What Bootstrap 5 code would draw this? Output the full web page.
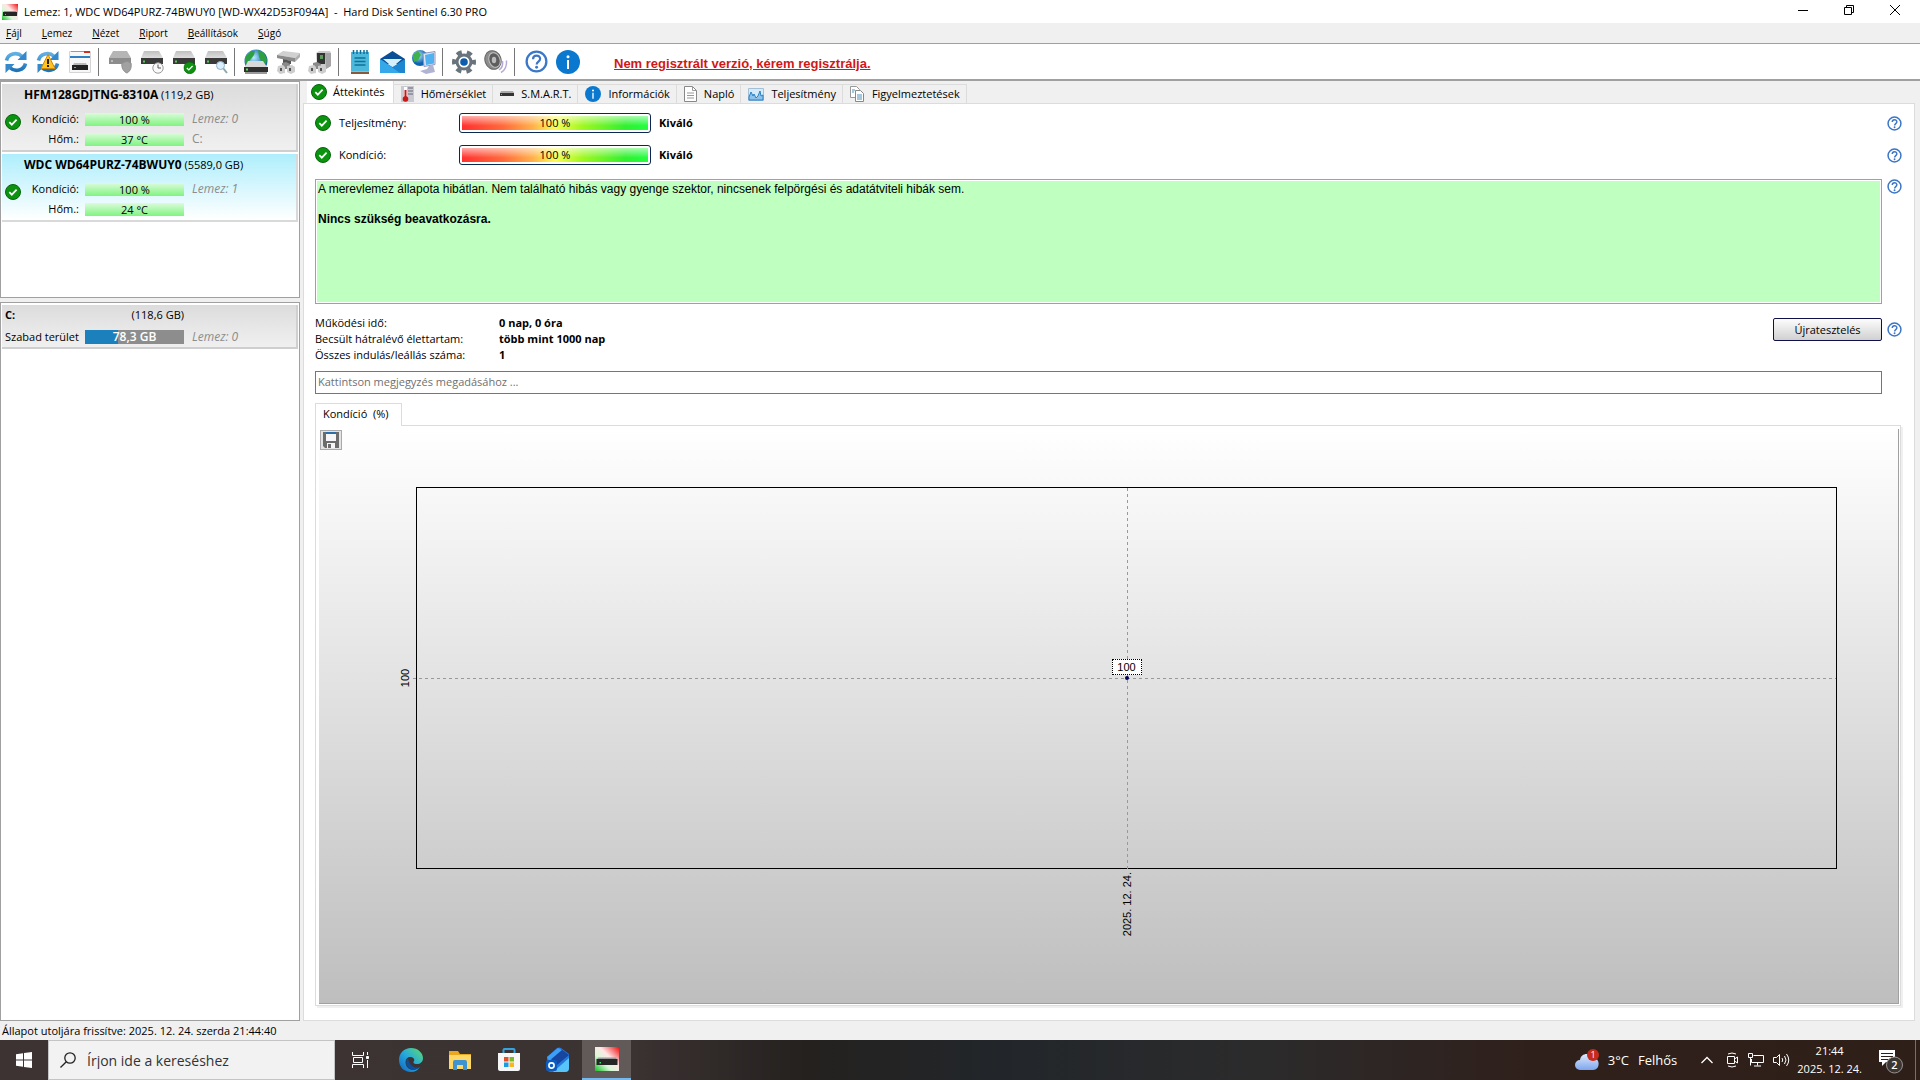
<!DOCTYPE html>
<html lang="hu">
<head>
<meta charset="utf-8">
<meta name="viewport" content="width=device-width, initial-scale=1">
<title>Hard Disk Sentinel 6.30 PRO</title>
<link href="https://cdn.jsdelivr.net/npm/bootstrap@5.3.0/dist/css/bootstrap.min.css" rel="stylesheet">
<style>
:root{--face:#f0f0f0;--edge:#dcdcdc}
body{font-family:"Open Sans","Noto Sans",sans-serif;font-size:11px;line-height:16px;color:#000;background:var(--face);height:100vh;overflow:hidden}
button{font:inherit;color:inherit}
.plain-btn{border:0;background:none;padding:0;display:flex;align-items:center;justify-content:center}
svg{display:block;flex:none}
.title-bar{height:23px;background:#fff;padding:0 2px}
.title-text{padding-left:2px;white-space:pre}
.title-bar .plain-btn{width:46px;height:20px}
.menu-bar{height:21px;padding:0 6px;gap:20px;font-size:10px;border-bottom:1px solid #a0a0a0}
.menu-bar a,.menu-bar u{color:#000}
.menu-bar a{text-decoration:none}
.tool-bar{height:37px;background:#fff;border-bottom:2px solid #a0a0a0}
.tool-bar .plain-btn{width:32px;height:32px}
.tool-sep{width:8px;height:28px;padding-left:2px}
.tool-sep::before{content:"";display:block;width:1px;height:28px;background:#777}
.reg-link{font:bold 13px/16px "Liberation Sans",Arial,sans-serif;color:#d01818;margin-left:30px;padding-top:4px}
.reg-link:hover{color:#a00}
.side-pane{width:300px;gap:4px}
.side-box{background:#fff;border:1px solid #a0a0a0;padding:2px 1px}
.disk-box{height:217px}
.disk-item{border:solid #cfcfcf;border-width:0 2px 2px 0;background:linear-gradient(#dcdcdc,#f0f0f0);height:68px;margin-bottom:2px;padding:3px 0 0 3px}
.disk-item.active{background:linear-gradient(#aeeefc,#fff);border-color:#d9d9d9}
.disk-name{padding-left:19px;height:20px}
.disk-name strong{font-size:12px}
.disk-grid{display:grid;grid-template-columns:20px 54px 105px 1fr;row-gap:4px;grid-auto-rows:16px;align-items:center}
.disk-grid .disk-state{grid-row:1/3;align-self:start;padding-top:3px}
.disk-grid .lab{text-align:right}
.meter-green{margin-left:6px;height:13px;line-height:13px;text-align:center;background:linear-gradient(#dcfbdc,#80f480)}
.side-note{padding-left:8px;color:#8c8c8c;font-style:italic;font-size:12px}
.volume-item{height:44px;border:solid #cfcfcf;border-width:0 2px 2px 0;background:linear-gradient(#dcdcdc,#f0f0f0);padding:2px 0 0 3px}
.volume-grid{display:grid;grid-template-columns:80px 99px 1fr;row-gap:6px;grid-auto-rows:16px;align-items:center}
.vol-label{white-space:nowrap}
.meter-blue{height:14px;line-height:14px;text-align:center;color:#fff;font-size:12px;font-weight:600;background:linear-gradient(90deg,#1c80bd 33%,#8d8d8d 33%)}
.main-pane{margin-left:3px;padding-right:5px}
.tab-strip{height:23px;padding:0 4px;margin-bottom:-1px}
.tab-strip .nav-link{border:1px solid var(--edge);border-left:0;border-radius:0;color:#000;background:var(--face);padding:0 6px 0 7px;height:20px;gap:7px;font-size:11px;display:flex;align-items:center}
.tab-strip .nav-link.active{background:#fff;height:23px;border-bottom:0;border-top:0;padding:0 8px 2px 4px;gap:6px}
.tab-page{background:#fff;border:1px solid var(--edge);padding:9px 12px 14px 11px}
.help-col{width:20px;justify-content:flex-end}
.score-row{height:20px}
.score-list{display:grid;gap:12px;margin-bottom:14px}
.score-label{width:120px;padding-left:8px}
.score-meter{width:192px;height:20px;border:1px solid #0a2850;border-radius:3px;padding:2px}
.score-fill{height:14px;line-height:14px;text-align:center;background:linear-gradient(rgba(255,255,255,.6),rgba(255,255,255,0) 70%),linear-gradient(90deg,#ff3030,#ff6a3a 22%,#ffb04a 38%,#fbfb50 50%,#9df820 65%,#30f030 88%,#20ff40)}
.state-box{height:125px;border:1px solid #a0a0a0;background:#bfffbf;box-shadow:inset 0 0 0 1px #fff;padding:2px;font:12px/15px "Liberation Sans",Arial,sans-serif}
.facts-row{padding-top:11px}
.facts{display:grid;grid-template-columns:184px auto;margin:0}
.facts dt{font-weight:400}.facts dd{margin:0;font-weight:700}
.retest-group{padding-top:3px}
.retest{width:109px;height:23px;border:1px solid #10104a;border-radius:2px;background:linear-gradient(#fdfdfd,#d0d0d0)}
.note-input{height:23px;min-height:23px;border:1px solid #767676;border-radius:0;font-size:11px;padding:0 2px 2px;line-height:16px}
.note-input::placeholder{color:#707070}
.graph-tab{width:87px;height:23px;margin-top:9px;border:1px solid var(--edge);border-bottom:0;padding:0 0 2px 7px;background:#fff;margin-bottom:-1px;position:relative;display:flex;align-items:center;white-space:pre}
.graph-page{border:1px solid var(--edge);box-shadow:2px 2px 0 #f0f0f0;padding:3px 1px 1px 3px;margin-right:1px;min-height:0}
.graph{border:solid #a0a0a0;border-width:0 1px 1px 0;background:linear-gradient(#fff,#bebebe);font:11px/14px "Liberation Sans",Arial,sans-serif;min-height:0}
.save-btn{width:22px;height:20px;border:1px solid #a9a9a9;background:#e4e4e4;margin:1px}
.plot-wrap{margin:36px 61px 134px 97px}
.plot{position:relative;border:1px solid #000}
.line-v{position:absolute;left:50%;top:0;bottom:-4px;width:1px;background:repeating-linear-gradient(#999 0 3px,transparent 3px 6px)}
.line-h{position:absolute;top:50%;left:-4px;right:0;height:1px;background:repeating-linear-gradient(90deg,#999 0 3px,transparent 3px 6px)}
.point{position:absolute;left:50%;top:50%;width:4px;height:4px;margin:-2px 0 0 -2px;background:#000060;border-radius:2px}
.point-tag{position:absolute;left:50%;top:50%;transform:translate(-50%,-19px);width:30px;height:16px;border:1px dotted #000;background:#fff;text-align:center}
.y-tag{position:absolute;left:-19px;top:50%;writing-mode:vertical-rl;transform:translateY(-50%) rotate(180deg)}
.x-tag{position:absolute;left:50%;top:100%;margin-top:4px;white-space:nowrap;writing-mode:vertical-rl;transform:translateX(-50%) rotate(180deg)}
.status-line{height:19px;padding-left:2px;line-height:19px}
.task-bar{height:40px;color:#fff;background:linear-gradient(90deg,#3d3333,#3b3232 33%,#24211f 42%,#22262a 52%,#2b2b2c 65%,#30201b 80%,#2e1f19)}
.task-bar .plain-btn{width:49px;height:40px}
.task-bar .start-btn{width:48px}
.task-bar .view-btn{width:51px}
.task-search{width:287px;height:40px;background:#f2f2f2;border:1px solid #c4c4c4;color:#333;gap:11px;padding-left:11px}
.task-search input{border:0;background:none;outline:0;font-size:14px;padding:2px 0 0;color:#222;width:220px}
.task-search input::placeholder{color:#333}
.task-bar .plain-btn.running{background:#625a59;border-bottom:2px solid #76b9ed}
.task-bar .tray{width:auto}
.weather{font-size:13px;gap:9px}
.tray-icons{gap:9px;margin-left:24px}
.clock{line-height:18px;text-align:center;margin:0 15px 0 7px}
.notice{margin-right:10px}
.show-desk{width:5px;height:40px;border-left:1px solid #7a706b}
</style>
<script src="https://cdn.jsdelivr.net/npm/bootstrap@5.3.0/dist/js/bootstrap.bundle.min.js"></script>
</head>
<body class="d-flex flex-column">
<svg width="0" height="0" class="position-absolute" aria-hidden="true">
<defs>
<linearGradient id="gHds" x1="0" y1="1" x2="1" y2="0"><stop offset="0" stop-color="#10c020"/><stop offset=".35" stop-color="#d8f8d8"/><stop offset=".6" stop-color="#ffe6e6"/><stop offset="1" stop-color="#f01010"/></linearGradient>
<linearGradient id="gBlue" x1="0" y1="0" x2="0" y2="1"><stop offset="0" stop-color="#62aee4"/><stop offset="1" stop-color="#1f74b8"/></linearGradient>
<linearGradient id="gGrey" x1="0" y1="0" x2="0" y2="1"><stop offset="0" stop-color="#c0c0c0"/><stop offset="1" stop-color="#dedede"/></linearGradient>
<linearGradient id="gEdge" x1="0" y1="1" x2="1" y2="0"><stop offset="0" stop-color="#0f63c0"/><stop offset=".5" stop-color="#27a9dc"/><stop offset="1" stop-color="#5ede6a"/></linearGradient>
<linearGradient id="gCloud" x1="0" y1="0" x2="0" y2="1"><stop offset="0" stop-color="#dfe9fb"/><stop offset="1" stop-color="#7da6ee"/></linearGradient>
<radialGradient id="gGlobe" cx=".4" cy=".35"><stop offset="0" stop-color="#b8ecff"/><stop offset="1" stop-color="#1063ae"/></radialGradient>
</defs>
<symbol id="hds" viewBox="0 0 16 16"><path fill="url(#gHds)" d="M0 0h16v16H0z"/><path fill="#999" d="M2 7h12l1 2H1z"/><path fill="#252525" d="M1 8h14v4H1z"/><path fill="#3d6" d="M3 10h1v1H3z"/></symbol>
<symbol id="ok" viewBox="0 0 16 16"><circle cx="8" cy="8" r="7.5" fill="#0b930f" stroke="#07650a"/><path d="M4.3 8.2l2.5 2.5 4.8-5" fill="none" stroke="#fff" stroke-width="1.7"/></symbol>
<symbol id="help" viewBox="0 0 24 24"><circle cx="12" cy="12" r="10.3" fill="#fff" stroke="#3c76c6" stroke-width="2.4"/><path d="M8.4 9.6c0-5 7.4-4.7 7.4-.4 0 3-3.6 2.8-3.6 5.8" fill="none" stroke="#3c76c6" stroke-width="2.3"/><circle cx="12.1" cy="18" r="1.5" fill="#3c76c6"/></symbol>
<symbol id="info" viewBox="0 0 24 24"><circle cx="12" cy="12" r="12" fill="#0a78cf"/><path fill="#fff" d="M11 10h2v9h-2z"/><circle cx="12" cy="6.8" r="1.5" fill="#fff"/></symbol>
<symbol id="sync" viewBox="0 0 24 24"><path fill="none" stroke="url(#gBlue)" stroke-width="3.6" d="M2.5 10.5C4 3.5 13 1.500 18 6.200M21.500 13.500C20 20.500 11 22.500 6 17.800"/><path fill="#3488cc" d="M22.500 1v9h-9zM1.500 23v-9h9z"/></symbol>
<symbol id="drive" viewBox="0 0 24 24"><path fill="url(#gGrey)" d="M4 1h15l4 7H1z"/><path fill="#3a3a3a" d="M1 8h22v6H1z"/><path fill="#4ad04a" d="M3 10.500h2v2H3z"/></symbol>
<symbol id="cam" viewBox="0 0 18 12"><path fill="#8a8a8a" d="M5 1l4-1 4 2v5H5z"/><path fill="#cdcdcd" d="M1 4l5-1 2 2v6l-5 1-3-3zM10 4l5-1 3 2v5l-4 2-4-2z"/><path d="M4 6v3M13 6v3" stroke="#555" stroke-width="2"/></symbol>
</svg>

<header>
<div class="title-bar d-flex align-items-start">
<div class="d-flex align-items-center gap-1 pt-1"><svg width="16" height="16"><use href="#hds"/></svg><span class="title-text">Lemez: 1, WDC WD64PURZ-74BWUY0 [WD-WX42D53F094A]  -  Hard Disk Sentinel 6.30 PRO</span></div>
<div class="ms-auto d-flex">
<button class="plain-btn" aria-label="Kis méret"><svg width="10" height="10"><path d="M0 5.500h10" stroke="#000"/></svg></button>
<button class="plain-btn" aria-label="Előző méret"><svg width="10" height="10" fill="none" stroke="#000"><path d="M.5 2.500h7v7h-7zM2.500 2.500v-2h7v7h-2"/></svg></button>
<button class="plain-btn" aria-label="Bezárás"><svg width="10" height="10"><path d="M0 0l10 10M10 0L0 10" stroke="#000"/></svg></button>
</div></div>
<nav class="menu-bar d-flex align-items-center"><a href="#"><u>F</u>ájl</a><a href="#"><u>L</u>emez</a><a href="#"><u>N</u>ézet</a><a href="#"><u>R</u>iport</a><a href="#"><u>B</u>eállítások</a><a href="#"><u>S</u>úgó</a></nav>
<div class="tool-bar d-flex align-items-center" role="toolbar" aria-label="Eszköztár">
<button class="plain-btn" aria-label="Frissítés"><svg width="24" height="24"><use href="#sync"/></svg></button>
<button class="plain-btn" aria-label="Teljes frissítés"><svg width="24" height="24" viewBox="0 0 24 24"><use href="#sync"/><path fill="#ffc421" stroke="#d48a00" d="M12 4.500l7 14H5z"/><path fill="#222" d="M11 9h2v5h-2zM11 15h2v2h-2z"/></svg></button>
<button class="plain-btn" aria-label="Lemez ablak"><svg width="24" height="24" viewBox="0 0 24 24"><path fill="#f7f7f7" stroke="#d5d5d5" d="M1.500 1.500h21v21h-21z"/><path fill="#999" d="M3 1h13v1H3z"/><path fill="#d03020" d="M16 1h6v2h-6z"/><path fill="#2f7fc4" d="M2 6h20v2H2z"/><path fill="#bbb" d="M6 13h12l1 2H5z"/><path fill="#222" d="M4 15h16v5H4z"/><path fill="#4c4" d="M6 17h2v1H6z"/></svg></button>
<span class="tool-sep"></span>
<button class="plain-btn" disabled aria-label="Teszt leállítás"><svg width="24" height="24" viewBox="0 0 24 24"><path fill="#b5b5b5" d="M5 1h14l4 7H1z"/><path fill="#8c8c8c" d="M1 8h22v6H1z"/><path fill="#b9b9b9" d="M3 10h2v2H3z"/><path fill="#a1a1a1" stroke="#8e8e8e" d="M14 13l5-2 4 2c1 6-2 9-4 10-3-1-6-5-5-10z"/></svg></button>
<button class="plain-btn" aria-label="Ütemezett teszt"><svg width="24" height="24" viewBox="0 0 24 24"><use href="#drive"/><circle cx="18" cy="18" r="5.200" fill="#fafafa" stroke="#999"/><path d="M18 14.500V18h3" fill="none" stroke="#555"/></svg></button>
<button class="plain-btn" aria-label="Teszt indítása"><svg width="24" height="24" viewBox="0 0 24 24"><use href="#drive"/><use href="#ok" x="11.500" y="11.500" width="12.500" height="12.500"/></svg></button>
<button class="plain-btn" aria-label="Felülvizsgálat"><svg width="24" height="24" viewBox="0 0 24 24"><use href="#drive"/><path d="M19 18l4 5" stroke="#8aa" stroke-width="2"/><circle cx="16.500" cy="15.500" r="4" fill="#dceffc" stroke="#8fb0cc"/></svg></button>
<span class="tool-sep"></span>
<button class="plain-btn" aria-label="Hálózati lemez"><svg width="26" height="26" viewBox="0 0 26 26"><circle cx="13" cy="12" r="11.500" fill="url(#gGlobe)"/><path fill="#2fa042" d="M3 7l5-5 4 0-1 4-3 4-5 5-1-3zM15 1l6 3 3 6-1 5-5-3-2-4z"/><path fill="#d9d9d9" d="M5 12h15l4 6H2z"/><path fill="#303030" d="M1 18h24v5H1z"/><path fill="#9a9a9a" d="M2 23h22v2H2z"/><path fill="#5d5" d="M3 19.500h2v2H3z"/></svg></button>
<button class="plain-btn" aria-label="Lemez csatolása"><svg width="25" height="24" viewBox="0 0 25 24"><path fill="#d0d0d0" d="M1 5l6-4 17 2-5 5z"/><path fill="#8a8a8a" d="M1 5l18 3v4L1 8z"/><path fill="#b0b0b0" d="M19 8l5-5v4l-5 5z"/><path fill="#555" d="M7 9l8 2v3H7z"/><use href="#cam" x="1" y="12" width="18" height="12"/></svg></button>
<button class="plain-btn" aria-label="Lemez leválasztása"><svg width="24" height="24" viewBox="0 0 24 24"><path fill="#cbcbcb" d="M8 3l3-2h11l1 2v13l-5 3H9z"/><path fill="#a4a4a4" d="M17 3h6v13l-5 3z"/><path fill="#333" d="M9 3h8v11H9z"/><path fill="#5a9a5a" d="M12 5h3v4h-3z"/><use href="#cam" x="0" y="12" width="18" height="12"/></svg></button>
<span class="tool-sep"></span>
<button class="plain-btn" aria-label="Jegyzet"><svg width="24" height="24" viewBox="0 0 24 24"><path fill="#4cb8dc" d="M3 2h18v19H3z"/><path fill="#885a3a" d="M3 21.500h18V24H3z"/><path d="M5.500 0v4M9 0v4M12.500 0v4M16 0v4M19 0v4" stroke="#126c94" stroke-width="1.500"/><path d="M6.500 8h11M6.500 11.500h11M6.500 15h11" stroke="#117297" stroke-width="1.600"/></svg></button>
<button class="plain-btn" aria-label="Levél"><svg width="25" height="24" viewBox="0 0 25 24"><path fill="#0a4e96" d="M0 9l12.500-8L25 9v5H0z"/><path fill="#d7effb" d="M3 9h19l-9.500 8z"/><path fill="#1c86d0" d="M0 9l12.500 8L25 9v14H0z"/><path fill="#35a8ea" d="M0 9l20 14H0z"/></svg></button>
<button class="plain-btn" aria-label="Hálózat"><svg width="25" height="24" viewBox="0 0 25 24"><circle cx="8" cy="8" r="8" fill="url(#gGlobe)"/><path fill="#3eb34b" d="M1 5l5-4 3 4-3 5-4 2z"/><path fill="#dfe5f5" stroke="#8d98c0" d="M11 3.500l12-2v13l-11 2z"/><path fill="#4fb2ee" d="M13 5l9-2v10.500l-8 1.500z"/><path fill="#b0b4d2" d="M17 16l4-1 2 7-9 2-6-3 7-2z"/></svg></button>
<span class="tool-sep"></span>
<button class="plain-btn" aria-label="Beállítások"><svg width="24" height="24" viewBox="0 0 24 24"><circle cx="12" cy="12" r="10" fill="none" stroke="#69737c" stroke-width="4" stroke-dasharray="5.240 5.232" stroke-dashoffset="2.600"/><circle cx="12" cy="12" r="8.500" fill="#69737c"/><circle cx="12" cy="12" r="5.500" fill="#fff"/><circle cx="12" cy="12" r="3.800" fill="#0c5cab"/></svg></button>
<button class="plain-btn" aria-label="Hang"><svg width="24" height="24" viewBox="0 0 24 24"><ellipse cx="9" cy="10" rx="8" ry="9.500" transform="rotate(-20 9 10)" fill="#8d8d8d" stroke="#666"/><ellipse cx="10.500" cy="10" rx="5.500" ry="7.500" transform="rotate(-20 10.500 10)" fill="#5d5d5d" stroke="#c4c4c4"/><ellipse cx="10" cy="10" rx="2.200" ry="3.200" fill="#bbb"/><path d="M15 20c3-2 4-6 3.500-9M17 22.500c4-2 6-7 5.500-12" stroke="#b6a8d8" stroke-width="1.500" fill="none"/></svg></button>
<span class="tool-sep"></span>
<button class="plain-btn" aria-label="Súgó"><svg width="23" height="23"><use href="#help"/></svg></button>
<button class="plain-btn" aria-label="Névjegy"><svg width="24" height="24"><use href="#info"/></svg></button>
<a href="#" class="reg-link">Nem regisztrált verzió, kérem regisztrálja.</a>
</div>
</header>

<div class="d-flex flex-grow-1" style="min-height:0">
<aside class="side-pane d-flex flex-column flex-shrink-0">
<section class="side-box disk-box">
<div class="disk-item"><div class="disk-name"><strong>HFM128GDJTNG-8310A</strong> (119,2 GB)</div>
<div class="disk-grid pt-1"><span class="disk-state"><svg width="16" height="16"><use href="#ok"/></svg></span><span class="lab">Kondíció:</span><span class="meter-green">100 %</span><span class="side-note">Lemez: 0</span><span class="lab">Hőm.:</span><span class="meter-green">37 °C</span><span class="side-note fst-normal">C:</span></div></div>
<div class="disk-item active"><div class="disk-name"><strong>WDC WD64PURZ-74BWUY0</strong> (5589,0 GB)</div>
<div class="disk-grid pt-1"><span class="disk-state"><svg width="16" height="16"><use href="#ok"/></svg></span><span class="lab">Kondíció:</span><span class="meter-green">100 %</span><span class="side-note">Lemez: 1</span><span class="lab">Hőm.:</span><span class="meter-green">24 °C</span></div></div>
</section>
<section class="side-box flex-grow-1">
<div class="volume-item"><div class="volume-grid"><strong>C:</strong><span class="text-end">(118,6 GB)</span><span></span><span class="vol-label">Szabad terület</span><span class="meter-blue">78,3 GB</span><span class="side-note">Lemez: 0</span></div></div>
</section>
</aside>

<main class="main-pane flex-grow-1 d-flex flex-column">
<nav class="tab-strip nav align-items-end">
<a class="nav-link active" href="#"><svg width="16" height="16"><use href="#ok"/></svg>Áttekintés</a>
<a class="nav-link" href="#"><svg width="13" height="16" viewBox="0 0 13 16"><path fill="#c9c9d2" d="M0 0h13v16H0z"/><path d="M7 2h5M7 5h5M7 8h5" stroke="#667"/><path d="M4.500 1v9" stroke="#fff" stroke-width="3"/><path d="M4.500 4v8" stroke="#c81818" stroke-width="2"/><circle cx="4.500" cy="13" r="2.800" fill="#c81818"/></svg>Hőmérséklet</a>
<a class="nav-link" href="#"><svg width="14" height="6" viewBox="0 0 14 6"><path fill="#aaa" d="M1 0h12l1 2H0z"/><path fill="#333" d="M0 2h14v3H0z"/><path fill="#4c4" d="M1 3h1v1H1z"/></svg>S.M.A.R.T.</a>
<a class="nav-link" href="#"><svg width="16" height="16"><use href="#info"/></svg>Információk</a>
<a class="nav-link" href="#"><svg width="13" height="16" viewBox="0 0 13 16"><path fill="#fff" stroke="#888" d="M.5.500h8l4 4v11H.5z"/><path d="M8.500.500v4h4M3 7h7M3 9.500h7M3 12h7" fill="none" stroke="#999"/></svg>Napló</a>
<a class="nav-link" href="#"><svg width="16" height="13" viewBox="0 0 16 13"><path fill="#d5ebf9" stroke="#a3c0d6" d="M.5.500h15v12H.5z"/><path fill="#8cc4ee" stroke="#2c80c4" d="M1 12V9l2-5 2 4 1-2 2 4 2-2 2-5 1 5 2-1v5z"/></svg>Teljesítmény</a>
<a class="nav-link" href="#"><svg width="15" height="16" viewBox="0 0 15 16"><path fill="#fff" stroke="#999" d="M.5.500h6l3 3v8h-9z"/><path fill="#fff" stroke="#888" d="M5.500 4.500h5l3 3v8h-8z"/><path d="M7 9h5M7 11h5M7 13h5M2 4h3M2 6h2" stroke="#4a90b8"/></svg>Figyelmeztetések</a>
</nav>
<div class="tab-page flex-grow-1 d-flex flex-column">
<div class="score-list">
<div class="score-row d-flex align-items-center"><svg width="16" height="16"><use href="#ok"/></svg><span class="score-label">Teljesítmény:</span><div class="score-meter ms-2"><div class="score-fill">100 %</div></div><strong class="ps-2">Kiváló</strong><button class="plain-btn ms-auto" aria-label="Súgó: teljesítmény"><svg width="15" height="15"><use href="#help"/></svg></button></div>
<div class="score-row d-flex align-items-center"><svg width="16" height="16"><use href="#ok"/></svg><span class="score-label">Kondíció:</span><div class="score-meter ms-2"><div class="score-fill">100 %</div></div><strong class="ps-2">Kiváló</strong><button class="plain-btn ms-auto" aria-label="Súgó: kondíció"><svg width="15" height="15"><use href="#help"/></svg></button></div>
</div>
<div class="d-flex align-items-start"><div class="state-box flex-grow-1">A merevlemez állapota hibátlan. Nem található hibás vagy gyenge szektor, nincsenek felpörgési és adatátviteli hibák sem.<br><br><strong>Nincs szükség beavatkozásra.</strong></div><button class="plain-btn help-col" aria-label="Súgó: állapot"><svg width="15" height="15"><use href="#help"/></svg></button></div>
<div class="facts-row d-flex align-items-start">
<dl class="facts"><dt>Működési idő:</dt><dd>0 nap, 0 óra</dd><dt>Becsült hátralévő élettartam:</dt><dd>több mint 1000 nap</dd><dt>Összes indulás/leállás száma:</dt><dd>1</dd></dl>
<div class="retest-group ms-auto d-flex align-items-center"><button class="retest">Újratesztelés</button><button class="plain-btn help-col" aria-label="Súgó: teszt"><svg width="15" height="15"><use href="#help"/></svg></button></div></div>
<div class="d-flex pt-2"><input type="text" class="form-control note-input" aria-label="Megjegyzés" placeholder="Kattintson megjegyzés megadásához ..."><span class="help-col flex-shrink-0"></span></div>
<div class="graph-tab">Kondíció  (%)</div>
<div class="graph-page flex-grow-1 d-flex">
<div class="graph flex-grow-1 d-flex flex-column">
<button class="plain-btn save-btn" aria-label="Mentés"><svg width="16" height="16" viewBox="0 0 16 16"><path fill="#6c6c6c" d="M0 0h16v16H2l-2-2z"/><path fill="#2b6fa8" d="M3 0h10v2H3z"/><path fill="#f6f6f6" d="M3 2h10v7H3zM4 11h8v5H4z"/><path fill="#6c6c6c" d="M5 12h3v4H5z"/></svg></button>
<div class="plot-wrap flex-grow-1 d-flex"><div class="plot flex-grow-1"><span class="line-v"></span><span class="line-h"></span><span class="point"></span><span class="point-tag">100</span><span class="y-tag">100</span><span class="x-tag">2025. 12. 24.</span></div></div>
</div></div>
</div>
</main>
</div>

<footer>
<div class="status-line">Állapot utoljára frissítve: 2025. 12. 24. szerda 21:44:40</div>
<div class="task-bar d-flex align-items-center">
<button class="plain-btn start-btn" aria-label="Start"><svg width="16" height="16" viewBox="0 0 16 16"><path fill="#fff" d="M0 2.200l7-1v6.300H0zM8 1l8-1v7.500H8zM0 8.500h7v6.300l-7-1zM8 8.500h8V16l-8-1z"/></svg></button>
<label class="task-search d-flex align-items-center"><svg width="16" height="16" fill="none" stroke="#222" stroke-width="1.300"><circle cx="10" cy="6" r="5.200"/><path d="M6.300 9.700L.5 15.500"/></svg><input type="text" aria-label="Keresés" placeholder="Írjon ide a kereséshez"></label>
<button class="plain-btn view-btn" aria-label="Feladatnézet"><svg width="17" height="16" fill="none" stroke="#fff"><path d="M.5 0v3.500h11V0M.5 16v-3.500h11V16M1.500 5.500h9v5h-9zM15.500 0v3M15.500 8v8"/><path fill="#fff" d="M14.500 4.500h2v2h-2z"/></svg></button>
<button class="plain-btn" aria-label="Edge"><svg width="24" height="24" viewBox="0 0 24 24"><path fill="url(#gEdge)" d="M0 12C0 5 5 0 12 0s12 5 12 10c0 4-3 6-6 6-4 0-4-2-3-3 1-2-1-4-4-4-5 0-6 7-2 11 3 3 8 2 12-1-2 3-5 5-9 5C5 24 0 19 0 12z"/><path fill="#0d4f9e" d="M9 10c-4 4-1 11 5 12 3 0 6-2 7-3-5 2-11-1-12-9z"/></svg></button>
<button class="plain-btn" aria-label="Fájlkezelő"><svg width="22" height="20" viewBox="0 0 22 20"><path fill="#e8a820" d="M0 1h9l2 3h11v4H0z"/><path fill="#ffd766" d="M0 5h22v14H0z"/><path fill="#3f93cf" d="M4 12q0-2 2-2h10q2 0 2 2v8h-4v-5H8v5H4z"/></svg></button>
<button class="plain-btn" aria-label="Áruház"><svg width="24" height="24" viewBox="0 0 24 24"><path d="M6.500 6V2q0-1 1-1h9q1 0 1 1v4" fill="none" stroke="#36a2e0" stroke-width="2"/><path fill="#f6f6f6" d="M1 5h22v16q0 2-2 2H3q-2 0-2-2z"/><path fill="#e0522c" d="M7 9h4.500v4.500H7z"/><path fill="#7db928" d="M12.500 9H17v4.500h-4.500z"/><path fill="#1c9be0" d="M7 14.500h4.500V19H7z"/><path fill="#f6b81a" d="M12.500 14.500H17V19h-4.500z"/></svg></button>
<button class="plain-btn" aria-label="Outlook"><svg width="24" height="26" viewBox="0 0 24 26"><path fill="#2477dd" d="M1 10L11 1q2-1 4 0l8 6v14q0 4-4 4H5q-4 0-4-4z"/><path fill="#1646a0" d="M4 11l11-9 8 6-12 10z"/><path fill="#3d9ff5" d="M1 10L12 1l4 2L3 14z"/><path fill="#57c4fa" d="M7 25l16-14v10q0 4-4 4z"/><rect y="13" width="11" height="11" rx="2" fill="#0c5cc0"/><circle cx="5.500" cy="18.500" r="2.600" fill="none" stroke="#fff" stroke-width="1.600"/></svg></button>
<button class="plain-btn running" aria-label="Hard Disk Sentinel"><svg width="24" height="24"><use href="#hds"/></svg></button>
<div class="ms-auto d-flex align-items-center weather"><svg width="24" height="22" viewBox="0 0 24 22"><path fill="url(#gCloud)" d="M5 21a5 5 0 010-10C6 4 15 3 17 9c5-1 8 4 6 9-1 2-3 3-5 3z"/><circle cx="18" cy="6" r="6" fill="#c42b1c"/><text x="18" y="9" text-anchor="middle" font-size="9" fill="#fff">1</text></svg><span>3°C</span><span>Felhős</span></div>
<div class="tray-icons d-flex align-items-center"><button class="plain-btn tray pe-1" aria-label="Rejtett ikonok"><svg width="12" height="8"><path d="M.5 7L6 1.500 11.500 7" fill="none" stroke="#fff" stroke-width="1.300"/></svg></button><svg width="13" height="16" fill="none" stroke="#fff"><path d="M1.500 4.500h7v7h-7zM8.500 7l3-2v6l-3-2M2 2q4-2 8 0M2 14q4 2 8 0"/></svg><svg width="16" height="14" fill="none" stroke="#fff"><path d="M5.500 2.500h10v7h-12V6M9.500 9.500v3M6 13h7M.5.500h4v4h-4zM2.500 4.500v8"/></svg><svg width="17" height="14" fill="none" stroke="#fff"><path d="M.5 4.500h3l3-3v11l-3-3h-3zM9 5q1.500 2 0 4M11.500 3q3 4 0 8M13.500 1q4.500 6 0 12"/></svg></div>
<div class="clock">21:44<br>2025. 12. 24.</div>
<button class="plain-btn tray notice" aria-label="Értesítések"><svg width="28" height="28" viewBox="0 0 28 28"><path fill="#fff" d="M2 4h16v12h-9l-4 4v-4H2z"/><path d="M4 7.500h12M4 10.500h12M4 13.500h7" stroke="#2e1f19"/><circle cx="17.500" cy="19" r="8" fill="#3b3533" stroke="#9a9491"/><text x="17.500" y="23" text-anchor="middle" font-size="11" font-weight="600" fill="#fff">2</text></svg></button>
<span class="show-desk"></span>
</div>
</footer>
</body>
</html>
